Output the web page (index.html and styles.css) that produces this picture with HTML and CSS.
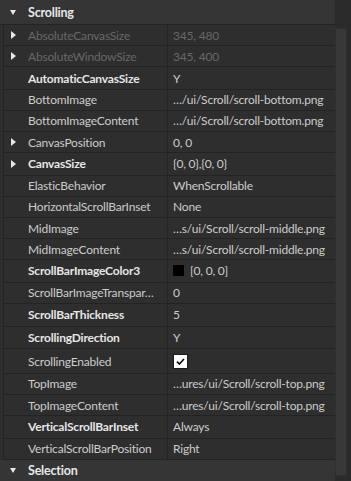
FILE: index.html
```html
<!DOCTYPE html>
<html>
<head>
<meta charset="utf-8">
<link rel="stylesheet" href="styles.css">
</head>
<body>
<div class="panel">
  <div class="list">
    <div class="section"><span class="caret-down"></span><span class="section-title">Scrolling</span></div>
    <div class="row"><div class="name disabled"><span class="caret-right"></span>AbsoluteCanvasSize</div><div class="value disabled">345, 480</div></div>
    <div class="row"><div class="name disabled"><span class="caret-right"></span>AbsoluteWindowSize</div><div class="value disabled">345, 400</div></div>
    <div class="row bold"><div class="name">AutomaticCanvasSize</div><div class="value">Y</div></div>
    <div class="row"><div class="name">BottomImage</div><div class="value">…/ui/Scroll/scroll-bottom.png</div></div>
    <div class="row"><div class="name">BottomImageContent</div><div class="value">…/ui/Scroll/scroll-bottom.png</div></div>
    <div class="row"><div class="name"><span class="caret-right"></span>CanvasPosition</div><div class="value">0, 0</div></div>
    <div class="row bold"><div class="name"><span class="caret-right"></span>CanvasSize</div><div class="value">{0, 0},{0, 0}</div></div>
    <div class="row"><div class="name">ElasticBehavior</div><div class="value">WhenScrollable</div></div>
    <div class="row"><div class="name">HorizontalScrollBarInset</div><div class="value">None</div></div>
    <div class="row"><div class="name">MidImage</div><div class="value">…s/ui/Scroll/scroll-middle.png</div></div>
    <div class="row"><div class="name">MidImageContent</div><div class="value">…s/ui/Scroll/scroll-middle.png</div></div>
    <div class="row bold"><div class="name">ScrollBarImageColor3</div><div class="value"><span class="swatch"></span>[0, 0, 0]</div></div>
    <div class="row"><div class="name">ScrollBarImageTranspar…</div><div class="value">0</div></div>
    <div class="row bold"><div class="name">ScrollBarThickness</div><div class="value">5</div></div>
    <div class="row bold"><div class="name">ScrollingDirection</div><div class="value">Y</div></div>
    <div class="row check-row"><div class="name">ScrollingEnabled</div><div class="value"><span class="checkbox"><svg width="9" height="7" viewBox="0 0 9 7"><path d="M1 3.6 L3.4 6 L8 1" fill="none" stroke="#000" stroke-width="1.6"/></svg></span></div></div>
    <div class="row"><div class="name">TopImage</div><div class="value">…ures/ui/Scroll/scroll-top.png</div></div>
    <div class="row"><div class="name">TopImageContent</div><div class="value">…ures/ui/Scroll/scroll-top.png</div></div>
    <div class="row bold"><div class="name">VerticalScrollBarInset</div><div class="value">Always</div></div>
    <div class="row"><div class="name">VerticalScrollBarPosition</div><div class="value">Right</div></div>
    <div class="section"><span class="caret-down"></span><span class="section-title">Selection</span></div>
  </div>
  <div class="scrollbar"><div class="thumb"></div></div>
</div>
</body>
</html>
```

FILE: styles.css
```css
html, body {
  margin: 0;
  padding: 0;
  background: #2e2e2e;
}
.panel {
  display: flex;
  width: 351px;
  height: 481px;
  overflow: hidden;
  font-family: Lato, "Noto Sans", sans-serif;
  font-size: 12px;
  letter-spacing: -0.2px;
  color: #cccccc;
}
.list {
  width: 335px;
  flex: none;
  display: flex;
  flex-direction: column;
}
.section {
  box-sizing: border-box;
  height: 25px;
  flex: none;
  display: flex;
  align-items: center;
  background: #353535;
  border-bottom: 1px solid #232323;
  padding-left: 10px;
  color: #e8e8e8;
  font-weight: bold;
  font-size: 12.5px;
}
.section:last-child {
  border-bottom: none;
  height: 22px;
}
.caret-down {
  width: 0;
  height: 0;
  border-left: 3px solid transparent;
  border-right: 3px solid transparent;
  border-top: 5px solid #e8e8e8;
  margin-right: 12px;
}
.caret-right {
  position: absolute;
  left: 7px;
  top: 50%;
  margin-top: -4px;
  width: 0;
  height: 0;
  border-top: 4px solid transparent;
  border-bottom: 4px solid transparent;
  border-left: 5px solid #e8e8e8;
}
.row {
  box-sizing: border-box;
  height: 21.1px;
  flex: none;
  display: grid;
  grid-template-columns: 164px 1fr;
  border-bottom: 1px solid #232323;
  border-left: 1px solid #232323;
  margin-left: 3px;
}
.row.bold {
  height: 22.67px;
}
.row.check-row {
  height: 24.7px;
}
.name {
  position: relative;
  display: flex;
  align-items: center;
  padding-left: 24px;
  border-right: 1px solid #232323;
  white-space: nowrap;
  overflow: hidden;
  color: #cccccc;
}
.bold .name {
  font-weight: bold;
  color: #e6e6e6;
}
.value {
  display: flex;
  align-items: center;
  padding-left: 5px;
  white-space: nowrap;
  overflow: hidden;
  color: #cccccc;
}
.disabled {
  color: #686868;
}
.swatch {
  width: 11px;
  height: 11px;
  background: #000;
  margin-right: 6px;
}
.checkbox {
  box-sizing: border-box;
  width: 15px;
  height: 15px;
  background: #fff;
  border: 1px solid #1a1a1a;
  display: flex;
  align-items: center;
  justify-content: center;
}
.scrollbar {
  width: 16px;
  flex: none;
  background: #2a2a2a;
  padding: 28px 4px 5px 0;
  box-sizing: border-box;
  display: flex;
}
.thumb {
  flex: 1;
  background: #383838;
  border: 1px solid #2f2f2f;
}
```
